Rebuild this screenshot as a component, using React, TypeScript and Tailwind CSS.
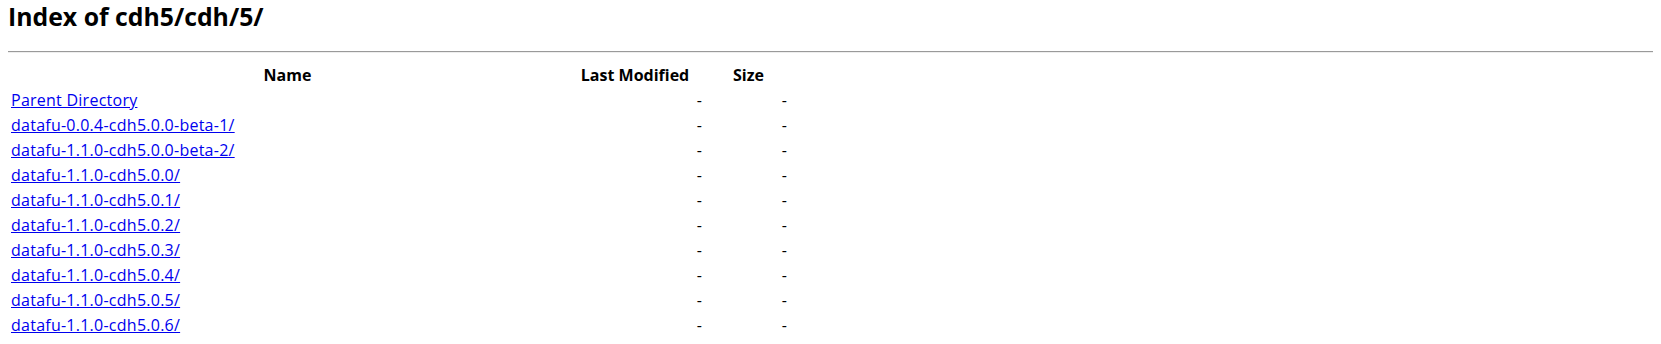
const rows = [
  "Parent Directory",
  "datafu-0.0.4-cdh5.0.0-beta-1/",
  "datafu-1.1.0-cdh5.0.0-beta-2/",
  "datafu-1.1.0-cdh5.0.0/",
  "datafu-1.1.0-cdh5.0.1/",
  "datafu-1.1.0-cdh5.0.2/",
  "datafu-1.1.0-cdh5.0.3/",
  "datafu-1.1.0-cdh5.0.4/",
  "datafu-1.1.0-cdh5.0.5/",
  "datafu-1.1.0-cdh5.0.6/",
  "datafu-1.1.0-cdh5.1.0/",
];

export default function App() {
  return (
    <main className="bg-white text-black px-2 h-[344px] overflow-hidden font-['Open_Sans',sans-serif]">
      <h1 className="text-[24.8px] font-bold leading-[32px]">Index of cdh5/cdh/5/</h1>

      <div className="mt-[19px] border-t border-t-[#9a9a9a] border-b border-b-[#eeeeee]" />

      <div className="mt-[10px] pl-[3px] grid grid-cols-[553px_142px_85px] text-[16px]">
        <div className="font-bold text-center leading-[25px]">Name</div>
        <div className="font-bold text-center leading-[25px]">Last Modified</div>
        <div className="font-bold text-center leading-[25px]">Size</div>

        {rows.map((name) => (
          <div key={name} className="contents">
            <div className="leading-[25px] tracking-[0.25px]">
              <a href="#" className="text-[#0000ee] underline">
                {name}
              </a>
            </div>
            <div className="leading-[25px] text-right pr-[4px]">-</div>
            <div className="leading-[25px] text-right pr-[4px]">-</div>
          </div>
        ))}
      </div>
    </main>
  );
}
